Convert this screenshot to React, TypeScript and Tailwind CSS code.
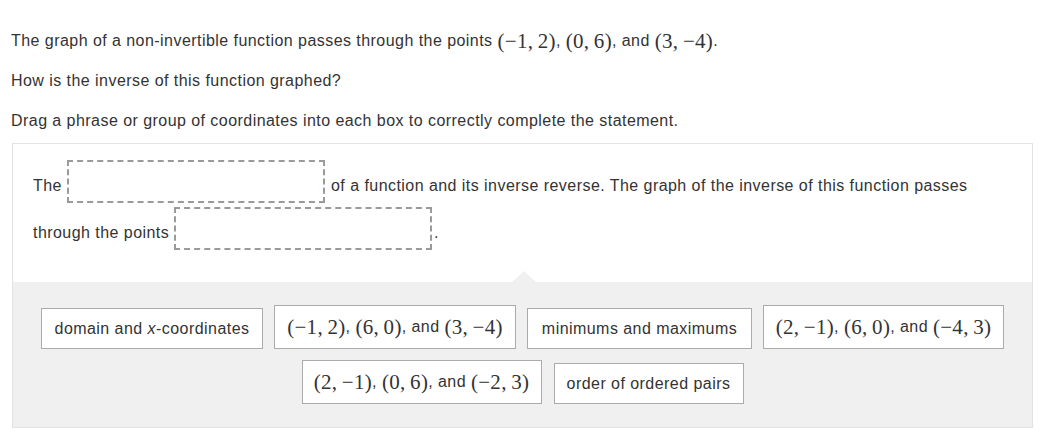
import React from 'react';

const MATH = 'font-["Liberation_Serif","DejaVu_Serif",serif] text-[21px] tracking-[0.3px] leading-none';

// Small helper for a coordinate pair rendered like typeset math
const Pt = ({ a, b }: { a: string; b: string }) => (
  <span className={MATH}>
    ({a},{'\u2009'}{b})
  </span>
);

interface Tile {
  id: string;
  width: string;
  math?: [string, string][];
  label?: React.ReactNode;
}

const ROW_ONE: Tile[] = [
  { id: 'domain', width: 'w-[222px]', label: <>domain and <i>x</i>-coordinates</> },
  { id: 'pts-a', width: 'w-[242px]', math: [['−1', '2'], ['6', '0'], ['3', '−4']] },
  { id: 'minmax', width: 'w-[225px]', label: 'minimums and maximums' },
  { id: 'pts-b', width: 'w-[241px]', math: [['2', '−1'], ['6', '0'], ['−4', '3']] },
];

const ROW_TWO: Tile[] = [
  { id: 'pts-c', width: 'w-[240px]', math: [['2', '−1'], ['0', '6'], ['−2', '3']] },
  { id: 'order', width: 'w-[190px]', label: 'order of ordered pairs' },
];

const TileBox = ({ tile }: { tile: Tile }) => (
  <div
    className={`${tile.width} ${
      tile.math ? 'h-[44px]' : 'h-[41px]'
    } flex items-center justify-center bg-white border border-[#ababab] text-[#333]`}
  >
    {tile.math ? (
      <span className="flex items-center whitespace-pre">
        <Pt a={tile.math[0][0]} b={tile.math[0][1]} />
        <span>, </span>
        <Pt a={tile.math[1][0]} b={tile.math[1][1]} />
        <span>, and </span>
        <Pt a={tile.math[2][0]} b={tile.math[2][1]} />
      </span>
    ) : (
      <span>{tile.label}</span>
    )}
  </div>
);

const DropBox = () => (
  <div className="w-[258px] h-[43px] border-2 border-dashed border-[#9a9a9a] bg-white" />
);

export default function App() {
  return (
    <div className='w-[1047px] h-[438px] bg-white font-["Liberation_Sans",Arial,sans-serif] text-[#333] text-[16px] tracking-[0.45px] overflow-hidden'>
      {/* Prompt */}
      <div className="pl-[11px] pt-[31px] flex flex-col gap-[20px]">
        <p className="h-[20px] leading-[20px] flex items-center whitespace-pre">
          <span>The graph of a non-invertible function passes through the points </span>
          <Pt a="−1" b="2" />
          <span>, </span>
          <Pt a="0" b="6" />
          <span>, and </span>
          <Pt a="3" b="−4" />
          <span>.</span>
        </p>
        <p className="h-[20px] leading-[20px]">How is the inverse of this function graphed?</p>
        <p className="h-[20px] leading-[20px]">
          Drag a phrase or group of coordinates into each box to correctly complete the statement.
        </p>
      </div>

      {/* Drag & drop card */}
      <div className="relative ml-[12px] mt-[12px] w-[1021px] border border-[#e3e3e3]">
        <div className="pl-[20px] pt-[16px] pb-[32px] flex flex-col gap-[4px]">
          <div className="flex items-end">
            <span className="w-[34px] pb-[7px] leading-[20px]">The</span>
            <DropBox />
            <span className="ml-[6px] pb-[7px] leading-[20px]">
              of a function and its inverse reverse. The graph of the inverse of this function passes
            </span>
          </div>
          <div className="flex items-end">
            <span className="w-[141px] pb-[7px] leading-[20px]">through the points</span>
            <DropBox />
            <span className="ml-[2px] pb-[7px] leading-[20px]">.</span>
          </div>
        </div>

        <div className="relative bg-[#f0f0f0] pt-[23px] pb-[23px] flex flex-col items-center gap-[11px]">
          <div className="absolute -top-[11px] left-[499px] w-0 h-0 border-x-[12px] border-x-transparent border-b-[11px] border-b-[#f0f0f0]" />
          <div className="flex items-end gap-[11px]">
            {ROW_ONE.map((t) => (
              <TileBox key={t.id} tile={t} />
            ))}
          </div>
          <div className="flex items-end gap-[12px]">
            {ROW_TWO.map((t) => (
              <TileBox key={t.id} tile={t} />
            ))}
          </div>
        </div>
      </div>
    </div>
  );
}
